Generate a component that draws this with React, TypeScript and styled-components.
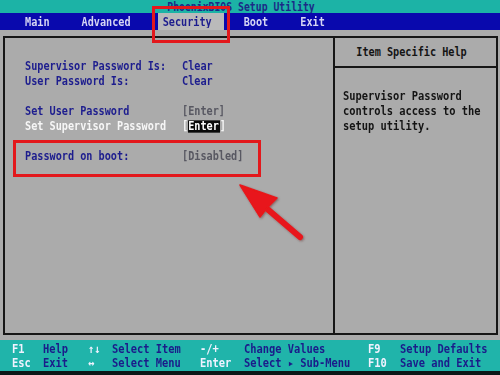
import { FC } from 'react'
import styled, { createGlobalStyle, css } from 'styled-components'

const GlobalStyle = createGlobalStyle`
  html, body {
    margin: 0;
    padding: 0;
    background: #ababab;
  }
`

const bios = css`
  font-family: 'DejaVu Sans Mono', 'Liberation Mono', monospace;
  font-weight: bold;
  font-size: 10.2px;
  white-space: pre;
`

const Screen = styled.div`
  position: relative;
  width: 500px;
  height: 375px;
  overflow: hidden;
  display: flex;
  flex-direction: column;
  background: #ababab;
  ${bios}
`

const TitleBar = styled.div`
  height: 13px;
  flex: none;
  background: #1cb3a6;
  display: flex;
  justify-content: center;
  overflow: hidden;
`

const Title = styled.span`
  display: inline-block;
  color: #1b2a86;
  font-size: 9.8px;
  line-height: 13px;
  transform: translate(-9px, 0) scaleY(1.3);
`

const MenuBar = styled.div`
  height: 17px;
  flex: none;
  background: #0909ad;
  display: flex;
  gap: 15px;
  padding-left: 20px;
`

const MenuItem = styled.div<{ $active?: boolean }>`
  display: flex;
  align-items: center;
  padding: 0 12px 0 5px;
  color: ${({ $active }) => ($active ? '#1d1d8e' : '#d6d6f4')};
  background: ${({ $active }) => ($active ? '#bababa' : 'transparent')};

  span {
    display: inline-block;
    transform: scaleY(1.15);
  }
`

const Body = styled.div`
  flex: 1;
  display: flex;
  padding: 6px 2px 5px 3px;
`

const Frame = styled.div`
  flex: 1;
  border: 2px solid #161616;
  display: grid;
  grid-template-columns: 328px 1fr;
`

const Fields = styled.div`
  padding: 21px 0 0 20px;
  display: grid;
  grid-template-columns: 157px auto;
  grid-auto-rows: 15px;
  align-content: start;
`

const Cell = styled.span<{ $tone?: 'label' | 'value' | 'selected' | 'plain' }>`
  display: block;
  line-height: 15px;
  transform: scaleY(1.12);
  color: ${({ $tone }) =>
    $tone === 'selected' ? '#f6f6f6' : $tone === 'plain' ? '#585862' : '#1d1d8e'};
`

const Blank = styled.div`
  grid-column: 1 / -1;
`

const Cursor = styled.span`
  background: #0a0a0a;
  color: #ffffff;
  padding-right: 1px;
`

const HelpPane = styled.div`
  border-left: 2px solid #161616;
  display: flex;
  flex-direction: column;
`

const HelpHeader = styled.div`
  height: 28px;
  border-bottom: 2px solid #161616;
  display: flex;
  align-items: center;
  justify-content: center;
  color: #141414;

  span {
    display: inline-block;
    transform: translateX(-4px) scaleY(1.12);
  }
`

const HelpText = styled.div`
  padding: 21px 8px 0;
  color: #141414;
  font-size: 10.4px;

  span {
    display: block;
    line-height: 15px;
    transform: scaleY(1.12);
  }
`

const StatusBar = styled.div`
  height: 31px;
  flex: none;
  box-sizing: border-box;
  background: #20b4aa;
  padding: 2px 0 0 12px;
  display: grid;
  grid-template-columns: 31px 45px 24px 88px 44px 124px 32px auto;
  grid-auto-rows: 14px;
  font-size: 10.4px;
`

const Key = styled.span<{ $desc?: boolean }>`
  display: block;
  line-height: 14px;
  transform: scaleY(1.12);
  color: ${({ $desc }) => ($desc ? '#1b1b8a' : '#f0f2ff')};
`

const BottomEdge = styled.div`
  height: 4px;
  flex: none;
  background: #0d1717;
`

const Callout = styled.div<{ $x: number; $y: number; $w: number; $h: number }>`
  position: absolute;
  left: ${({ $x }) => $x}px;
  top: ${({ $y }) => $y}px;
  width: ${({ $w }) => $w}px;
  height: ${({ $h }) => $h}px;
  box-sizing: border-box;
  border: 3px solid #e3181c;
  pointer-events: none;
`

const ArrowLayer = styled.svg`
  position: absolute;
  left: 0;
  top: 0;
  pointer-events: none;
`

const menu = ['Main', 'Advanced', 'Security', 'Boot', 'Exit']

const status = [
  ['F1', 'Help', '↑↓', 'Select Item', '-/+', 'Change Values', 'F9', 'Setup Defaults'],
  ['Esc', 'Exit', '↔', 'Select Menu', 'Enter', 'Select ▸ Sub-Menu', 'F10', 'Save and Exit'],
]

const App: FC = () => {
  return (
    <>
      <GlobalStyle />
      <Screen>
        <TitleBar>
          <Title>PhoenixBIOS Setup Utility</Title>
        </TitleBar>
        <MenuBar>
          {menu.map((m) => (
            <MenuItem key={m} $active={m === 'Security'}>
              <span>{m}</span>
            </MenuItem>
          ))}
        </MenuBar>

        <Body>
          <Frame>
            <Fields>
              <Cell>Supervisor Password Is:</Cell>
              <Cell>Clear</Cell>
              <Cell>User Password Is:</Cell>
              <Cell>Clear</Cell>
              <Blank />
              <Cell>Set User Password</Cell>
              <Cell $tone="plain">[Enter]</Cell>
              <Cell $tone="selected">Set Supervisor Password</Cell>
              <Cell $tone="selected">
                [<Cursor>Enter</Cursor>]
              </Cell>
              <Blank />
              <Cell>Password on boot:</Cell>
              <Cell $tone="plain">[Disabled]</Cell>
            </Fields>

            <HelpPane>
              <HelpHeader>
                <span>Item Specific Help</span>
              </HelpHeader>
              <HelpText>
                <span>Supervisor Password</span>
                <span>controls access to the</span>
                <span>setup utility.</span>
              </HelpText>
            </HelpPane>
          </Frame>
        </Body>

        <StatusBar>
          {status.map((row, r) =>
            row.map((t, i) => (
              <Key key={`${r}-${i}`} $desc={i % 2 === 1}>
                {t}
              </Key>
            ))
          )}
        </StatusBar>
        <BottomEdge />

        <Callout $x={152} $y={6} $w={78} $h={37} />
        <Callout $x={13} $y={140} $w={248} $h={37} />

        <ArrowLayer width={500} height={375} viewBox="0 0 500 375">
          <defs>
            <filter id="shade" x="-20%" y="-20%" width="140%" height="140%">
              <feDropShadow dx="1" dy="1" stdDeviation="1" floodColor="#5a2020" floodOpacity="0.5" />
            </filter>
          </defs>
          <g filter="url(#shade)" fill="#e8141a" stroke="#e8141a">
            <line x1={265} y1={207} x2={300} y2={237} strokeWidth={6} strokeLinecap="round" />
            <polygon points="240,185 277,198 267,208 260,217" strokeWidth={1.5} strokeLinejoin="round" />
          </g>
        </ArrowLayer>
      </Screen>
    </>
  )
}

export default App
